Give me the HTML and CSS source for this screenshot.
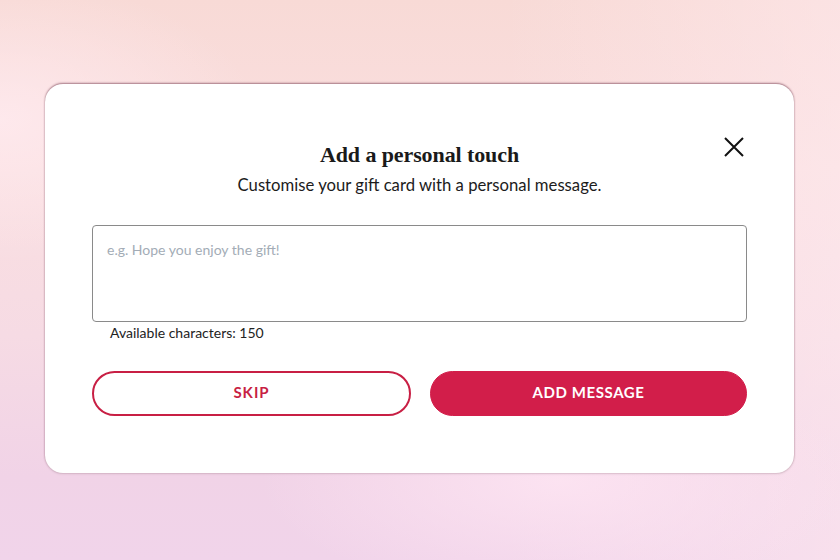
FILE: index.html
```html
<!DOCTYPE html>
<html lang="en">
<head>
<meta charset="utf-8">
<title>Add a personal touch</title>
<link rel="stylesheet" href="styles.css">
</head>
<body>
<div class="page">
  <div class="card">
    <button class="close" aria-label="Close">
      <svg width="22" height="22" viewBox="0 0 22 22"><path d="M2 2L20 20M20 2L2 20" stroke="#111" stroke-width="2" fill="none"/></svg>
    </button>
    <h1 class="title">Add a personal touch</h1>
    <p class="subtitle">Customise your gift card with a personal message.</p>
    <div class="field">
      <textarea class="message" placeholder="e.g. Hope you enjoy the gift!"></textarea>
      <div class="counter">Available characters: 150</div>
    </div>
    <div class="actions">
      <button class="btn btn-outline">SKIP</button>
      <button class="btn btn-fill">ADD MESSAGE</button>
    </div>
  </div>
</div>
</body>
</html>
```
FILE: styles.css
```css
html, body { margin: 0; padding: 0; }
body {
  width: 840px;
  height: 560px;
  overflow: hidden;
  background:
    radial-gradient(ellipse 260px 140px at 0px 120px, rgba(255,235,240,0.8), rgba(255,235,240,0) 100%),
    radial-gradient(ellipse 300px 120px at 560px 480px, rgba(253,228,242,0.9), rgba(253,228,242,0) 100%),
    linear-gradient(90deg, rgba(255,255,255,0) 60%, rgba(255,235,240,0.5) 100%),
    linear-gradient(180deg, #f8dad6 0%, #fadfe0 30%, #f6dbe4 60%, #f1d3e7 85%, #f1d4ea 100%);
  font-family: "Lato", "Noto Sans", sans-serif;
}
.page {
  padding: 84px 46px 0 45px;
}
.card {
  position: relative;
  background: #fff;
  border-radius: 18px;
  height: 389px;
  box-sizing: border-box;
  padding: 57px 47px 0 47px;
  box-shadow: 0 -1px 2px rgba(110, 50, 70, 0.6), 0 1px 2px rgba(150, 120, 130, 0.3);
}
.close {
  position: absolute;
  top: 52px;
  right: 49px;
  padding: 0;
  border: 0;
  background: none;
  width: 22px;
  height: 22px;
}
.close svg { display: block; }
.title {
  margin: 0;
  text-align: center;
  font-family: "Liberation Serif", "DejaVu Serif", serif;
  font-weight: 700;
  font-size: 22px;
  line-height: 28px;
  color: #1a1a1a;
  letter-spacing: -0.1px;
}
.subtitle {
  margin: 6px 0 0;
  text-align: center;
  font-size: 16.7px;
  line-height: 20px;
  color: #1c1c1c;
}
.field {
  margin-top: 30px;
}
.message {
  display: block;
  width: 100%;
  height: 97px;
  box-sizing: border-box;
  border: 1.5px solid #8a8a8a;
  border-radius: 4px;
  padding: 15px 14px;
  font-family: inherit;
  font-size: 14px;
  resize: none;
  outline: none;
}
.message::placeholder { color: #a3acb6; }
.counter {
  margin: 2px 0 0 18px;
  font-size: 14px;
  line-height: 18px;
  color: #222;
}
.actions {
  margin-top: 29px;
  display: flex;
  gap: 19px;
}
.btn {
  flex: 1;
  height: 45px;
  padding: 0 0 3px;
  border-radius: 23px;
  font-family: "Lato", sans-serif;
  font-weight: 700;
  font-size: 15px;
  letter-spacing: 0.6px;
  cursor: pointer;
}
.btn-outline {
  background: #fff;
  border: 2px solid #c81f44;
  color: #c81f44;
  letter-spacing: 1px;
}
.btn-fill {
  background: #d21e4a;
  border: 1px solid #d21e4a;
  color: #fff;
}
```
